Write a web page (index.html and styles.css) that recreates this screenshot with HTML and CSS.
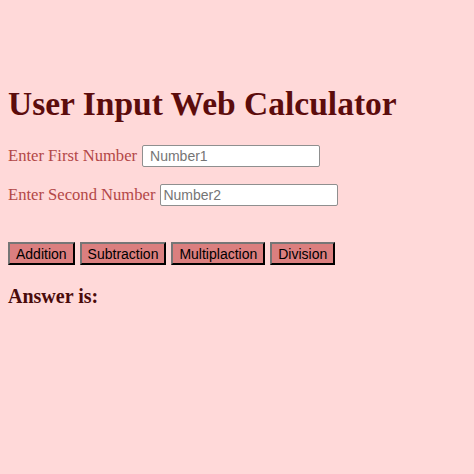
FILE: index.html
```html
<!DOCTYPE html>
<html lang="en">
<head>
    <meta charset="UTF-8">
    <meta name="viewport" content="width=device-width, initial-scale=1.0">
    <title>User Input Web Calculator</title>
    <link rel="stylesheet" href="styles.css">
</head>
<body>
    <div class="calculator">
        <h1>User Input Web Calculator</h1>
        <div class="field">
            <label for="num1">Enter First Number</label>
            <input type="text" id="num1" class="first" placeholder="Number1">
        </div>
        <div class="field">
            <label for="num2">Enter Second Number</label>
            <input type="text" id="num2" placeholder="Number2">
        </div>
        <div class="buttons">
            <button type="button" onclick="calc('+')">Addition</button>
            <button type="button" onclick="calc('-')">Subtraction</button>
            <button type="button" onclick="calc('*')">Multiplaction</button>
            <button type="button" onclick="calc('/')">Division</button>
        </div>
        <h3>Answer is: <span id="answer"></span></h3>
    </div>

    <script>
        function calc(op) {
            const a = parseFloat(document.getElementById('num1').value);
            const b = parseFloat(document.getElementById('num2').value);
            let result;

            if (op === '+') result = a + b;
            else if (op === '-') result = a - b;
            else if (op === '*') result = a * b;
            else result = a / b;

            document.getElementById('answer').textContent = isNaN(result) ? '' : result;
        }
    </script>
</body>
</html>
```

FILE: styles.css
```css
body {
    margin: 0;
    padding: 8px;
    background-color: #ffd9d9;
    font-family: "Liberation Serif", "Times New Roman", serif;
    min-height: 100vh;
    box-sizing: border-box;
}

.calculator {
    padding-top: 77px;
}

h1 {
    margin: 0 0 22px;
    font-size: 33.5px;
    color: #5c0c0c;
}

.field {
    display: flex;
    align-items: center;
    gap: 5px;
    margin-bottom: 17px;
    font-size: 16.6px;
    color: #b34747;
}

.field input {
    width: 178px;
    height: 22px;
    box-sizing: border-box;
    padding: 1px 2px;
    border: 1px solid #8f8f8f;
    border-radius: 2px;
    background-color: #fff;
    font-family: "Liberation Sans", Arial, sans-serif;
    font-size: 14px;
}

.field input.first {
    padding-left: 7px;
}

.field input::placeholder {
    color: #757575;
}

.buttons {
    display: flex;
    gap: 5px;
    margin-top: 36px;
}

.buttons button {
    padding: 1px 6px;
    height: 23px;
    background-color: #db7f7f;
    border: 2px outset #555;
    border-color: #767676 #222 #222 #767676;
    font-family: "Liberation Sans", Arial, sans-serif;
    font-size: 14px;
    color: #000;
    cursor: pointer;
}

h3 {
    margin: 20px 0 0;
    font-size: 20px;
    color: #4a0b0b;
}
```
